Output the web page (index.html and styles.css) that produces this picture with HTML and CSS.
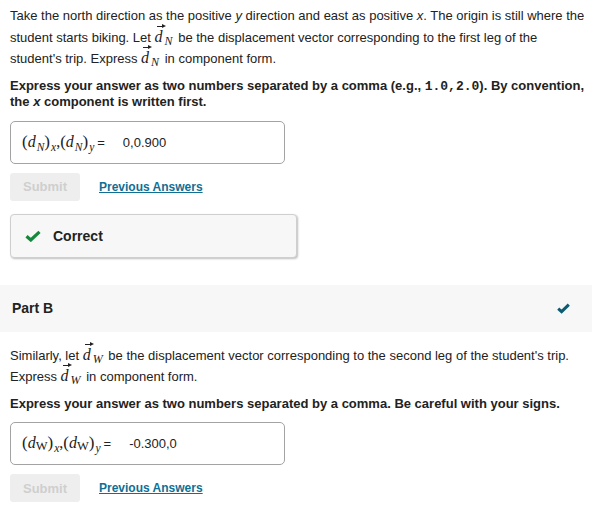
FILE: index.html
```html
<!DOCTYPE html>
<html>
<head>
<meta charset="utf-8">
<link rel="stylesheet" href="styles.css">
</head>
<body>
<div class="page">
  <section class="part">
    <p class="text">Take the north direction as the positive <i>y</i> direction and east as positive <i>x</i>. The origin is still where the student starts biking. Let <span class="vec"><span class="v">d</span><sub class="vs">N</sub></span> be the displacement vector corresponding to the first leg of the student's trip. Express <span class="vec"><span class="v">d</span><sub class="vs">N</sub></span> in component form.</p>
    <p class="instr">Express your answer as two numbers separated by a comma (e.g., <code>1.0,2.0</code>). By convention, the <i>x</i> component is written first.</p>
    <div class="answer">
      <span class="math"><span class="par">(</span><i>d</i><sub><i>N</i></sub><span class="par">)</span><sub><i>x</i></sub>,<span class="par">(</span><i>d</i><sub><i>N</i></sub><span class="par">)</span><sub><i>y</i></sub></span>
      <span class="eq">=</span>
      <span class="val">0,0.900</span>
    </div>
    <div class="actions">
      <button class="submit" disabled>Submit</button>
      <a class="prev" href="#">Previous Answers</a>
    </div>
    <div class="feedback">
      <svg class="ok" width="16" height="12" viewBox="0 0 16 12"><path d="M1.5 6.2 L5.8 10 L14.5 1.8" fill="none" stroke="#14883c" stroke-width="3.2" stroke-linecap="butt" stroke-linejoin="miter"/></svg>
      <span class="fb-text">Correct</span>
    </div>
  </section>

  <header class="part-head">
    <span class="part-title">Part B</span>
    <svg class="done" width="13" height="11" viewBox="0 0 13 11"><path d="M1.2 5.6 L4.6 8.6 L11.8 1.6" fill="none" stroke="#0b5c72" stroke-width="3"/></svg>
  </header>

  <section class="part">
    <p class="text text-b">Similarly, let <span class="vec"><span class="v">d</span><sub class="vs">W</sub></span> be the displacement vector corresponding to the second leg of the student's trip. Express <span class="vec"><span class="v">d</span><sub class="vs">W</sub></span> in component form.</p>
    <p class="instr instr-b">Express your answer as two numbers separated by a comma. Be careful with your signs.</p>
    <div class="answer">
      <span class="math"><span class="par">(</span><i>d</i><sub class="up">W</sub><span class="par">)</span><sub><i>x</i></sub>,<span class="par">(</span><i>d</i><sub class="up">W</sub><span class="par">)</span><sub><i>y</i></sub></span>
      <span class="eq">=</span>
      <span class="val">-0.300,0</span>
    </div>
    <div class="actions">
      <button class="submit" disabled>Submit</button>
      <a class="prev" href="#">Previous Answers</a>
    </div>
  </section>
</div>
</body>
</html>
```
FILE: styles.css
```css
html, body {
  margin: 0;
  padding: 0;
  background: #fff;
}
body {
  font-family: "Liberation Sans", Arial, sans-serif;
  font-size: 13px;
  color: #222;
  width: 597px;
  height: 511px;
  overflow: hidden;
}
.page {
  width: 592px;
}
.part {
  padding: 0 5px 0 10px;
}
.text {
  margin: 5px 0 0;
  font-size: 13px;
  line-height: 21.5px;
}
.vec {
  position: relative;
  display: inline-block;
  font-family: "Liberation Serif", "Times New Roman", serif;
  line-height: 13px;
}
.vec .v {
  font-style: italic;
  font-size: 16px;
}
.vec .v::before {
  content: "";
  position: absolute;
  left: 2px;
  top: -4px;
  width: 7px;
  height: 1px;
  background: #222;
}
.vec .v::after {
  content: "";
  position: absolute;
  left: 7px;
  top: -6px;
  border-left: 4px solid #222;
  border-top: 2.5px solid transparent;
  border-bottom: 2.5px solid transparent;
}
.vec .vs {
  font-style: italic;
  font-size: 12px;
  line-height: 12px;
  vertical-align: -3px;
  margin-left: 2px;
  margin-right: 2px;
}
.instr {
  margin: 8px 0 0;
  font-weight: bold;
  line-height: 15.5px;
}
.instr code {
  font-family: "Liberation Mono", "Courier New", monospace;
  font-weight: bold;
  font-size: 13px;
}
.answer {
  margin-top: 11px;
  width: 275px;
  height: 43px;
  box-sizing: border-box;
  border: 1px solid #a3a3a3;
  border-radius: 5px;
  display: flex;
  align-items: center;
  padding: 0 0 0 11px;
}
.math {
  font-family: "Liberation Serif", "Times New Roman", serif;
  font-size: 16px;
  color: #222;
  white-space: nowrap;
}
.math i {
  font-style: italic;
}
.math sub {
  font-size: 11.5px;
  vertical-align: -4px;
  margin-left: 1px;
}
.math sub.up {
  font-size: 12.5px;
  vertical-align: -2px;
  margin-left: 0;
}
.math .par {
  font-size: 17px;
}
.eq {
  margin-left: 3px;
  font-size: 13px;
}
.val {
  margin-left: 18px;
  font-size: 13px;
}
.actions {
  margin-top: 9px;
  display: flex;
  align-items: center;
  gap: 19px;
}
.submit {
  width: 70px;
  height: 28px;
  border: none;
  border-radius: 3px;
  background: #eeeeee;
  color: #cfcfcf;
  font-family: "Liberation Sans", Arial, sans-serif;
  font-size: 13px;
  font-weight: bold;
  padding: 0;
}
.prev {
  color: #0f6f95;
  font-weight: bold;
  font-size: 12px;
  text-decoration: underline;
}
.feedback {
  margin-top: 13px;
  width: 287px;
  height: 44px;
  box-sizing: border-box;
  border: 1px solid #cfcfcf;
  border-radius: 4px;
  background: #f7f7f7;
  box-shadow: 1px 1px 2px rgba(0,0,0,0.25);
  display: flex;
  align-items: center;
  padding-left: 14px;
}
.ok {
  display: block;
}
.fb-text {
  margin-left: 12px;
  font-weight: bold;
  font-size: 14px;
  color: #222;
}
.part-head {
  margin-top: 27px;
  height: 47px;
  background: #f7f7f7;
  display: flex;
  align-items: center;
  justify-content: space-between;
  padding: 0 22px 0 12px;
}
.part-title {
  font-weight: bold;
  font-size: 14px;
  color: #222;
}
.done {
  display: block;
}
.text-b {
  margin-top: 13px;
}
.instr-b {
  margin-top: 8px;
}
```
